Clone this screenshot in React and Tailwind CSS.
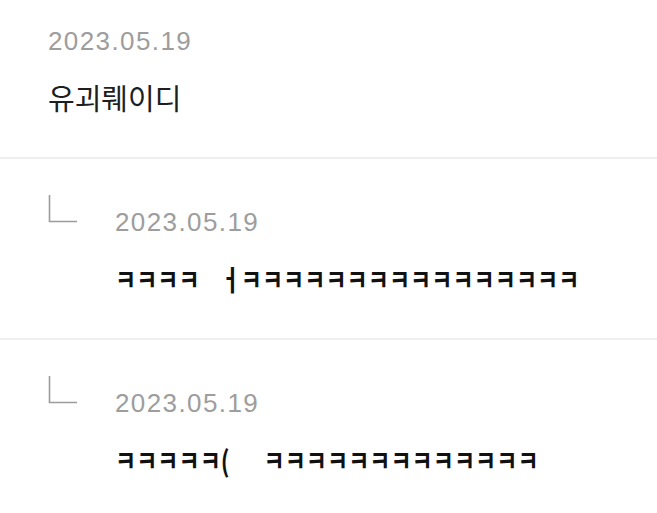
import React from 'react';

const comment = {
  date: '2023.05.19',
  body: '유괴뤠이디',
};

const replies = [
  { id: 1, date: '2023.05.19', parts: ['ㅋㅋㅋㅋ', 'ㅓㅋㅋㅋㅋㅋㅋㅋㅋㅋㅋㅋㅋㅋㅋㅋㅋ'], gap: 'gap-[20px]' },
  { id: 2, date: '2023.05.19', parts: ['ㅋㅋㅋㅋㅋ(', 'ㅋㅋㅋㅋㅋㅋㅋㅋㅋㅋㅋㅋㅋ'], gap: 'gap-[34px]' },
];

function ReplyArrow() {
  return (
    <svg width="30" height="30" viewBox="0 0 30 30" fill="none">
      <path d="M1.5 1v26.5H29" stroke="#9c9c9c" strokeWidth="1.6" />
    </svg>
  );
}

export default function App() {
  return (
    <div className="w-[657px] h-[513px] overflow-hidden bg-white font-['Liberation_Sans','Noto_Sans_CJK_KR',sans-serif]">
      {/* original comment */}
      <div className="px-12 pt-[25px] pb-[41px] border-b-2 border-[#efefef]">
        <p className="text-[26px] leading-[32px] text-[#9d9d9d] tracking-[1.4px]">{comment.date}</p>
        <p className="mt-[22px] text-[29px] leading-[37px] text-[#1e1e1e] font-['Noto_Sans_CJK_KR',sans-serif]">
          {comment.body}
        </p>
      </div>

      {replies.map((r) => (
        <div key={r.id} className="flex pl-12 pr-12 h-[181px] border-b-2 border-[#efefef]">
          <div className="w-[67px] shrink-0 pt-[35px]">
            <ReplyArrow />
          </div>
          <div className="pt-[47px]">
            <p className="text-[26px] leading-[32px] text-[#9d9d9d] tracking-[1.4px]">{r.date}</p>
            <p className={`mt-[25px] flex ${r.gap} text-[23px] leading-[30px] text-[#111] font-bold font-['Noto_Sans_CJK_KR',sans-serif] whitespace-nowrap`}>
              <span className="inline-block scale-y-125 origin-center">{r.parts[0]}</span>
              <span className="inline-block scale-y-125 origin-center">{r.parts[1]}</span>
            </p>
          </div>
        </div>
      ))}
    </div>
  );
}
